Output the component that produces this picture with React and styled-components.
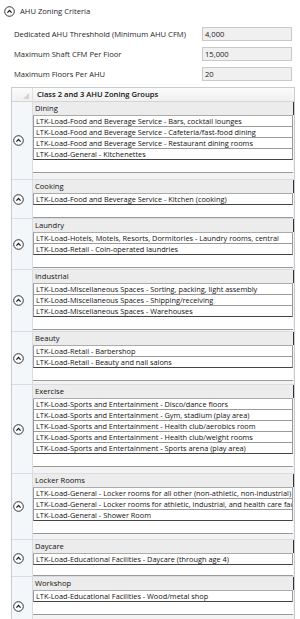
import React from "react";
import styled, { createGlobalStyle } from "styled-components";

const GlobalStyle = createGlobalStyle`
  html, body {
    margin: 0;
    padding: 0;
    background: #ffffff;
    overflow: hidden;
  }
  body {
    font-family: "Open Sans", "Noto Sans", sans-serif;
    font-size: 7.6px;
    color: #1e1e1e;
  }
`;

const fields = [
  { label: "Dedicated AHU Threshhold (Minimum AHU CFM)", value: "4,000" },
  { label: "Maximum Shaft CFM Per Floor", value: "15,000" },
  { label: "Maximum Floors Per AHU", value: "20" },
];

const groups = [
  {
    name: "Dining",
    tail: 6,
    items: [
      "LTK-Load-Food and Beverage Service - Bars, cocktail lounges",
      "LTK-Load-Food and Beverage Service - Cafeteria/fast-food dining",
      "LTK-Load-Food and Beverage Service - Restaurant dining rooms",
      "LTK-Load-General - Kitchenettes",
    ],
  },
  {
    name: "Cooking",
    tail: 0,
    items: ["LTK-Load-Food and Beverage Service - Kitchen (cooking)"],
  },
  {
    name: "Laundry",
    tail: 1,
    items: [
      "LTK-Load-Hotels, Motels, Resorts, Dormitories - Laundry rooms, central",
      "LTK-Load-Retail - Coin-operated laundries",
    ],
  },
  {
    name: "Industrial",
    tail: 1,
    items: [
      "LTK-Load-Miscellaneous Spaces - Sorting, packing, light assembly",
      "LTK-Load-Miscellaneous Spaces - Shipping/receiving",
      "LTK-Load-Miscellaneous Spaces - Warehouses",
    ],
  },
  {
    name: "Beauty",
    tail: 3,
    items: ["LTK-Load-Retail - Barbershop", "LTK-Load-Retail - Beauty and nail salons"],
  },
  {
    name: "Exercise",
    tail: 6,
    items: [
      "LTK-Load-Sports and Entertainment - Disco/dance floors",
      "LTK-Load-Sports and Entertainment - Gym, stadium (play area)",
      "LTK-Load-Sports and Entertainment - Health club/aerobics room",
      "LTK-Load-Sports and Entertainment - Health club/weight rooms",
      "LTK-Load-Sports and Entertainment - Sports arena (play area)",
    ],
  },
  {
    name: "Locker Rooms",
    tail: 5,
    items: [
      "LTK-Load-General - Locker rooms for all other (non-athletic, non-industrial)",
      "LTK-Load-General - Locker rooms for athletic, industrial, and health care facilities",
      "LTK-Load-General - Shower Room",
    ],
  },
  {
    name: "Daycare",
    tail: 0,
    empty: 10,
    items: ["LTK-Load-Educational Facilities - Daycare (through age 4)"],
  },
  {
    name: "Workshop",
    tail: 20,
    items: ["LTK-Load-Educational Facilities - Wood/metal shop"],
  },
];

function CollapseIcon({ size = 11 }) {
  return (
    <svg width={size} height={size} viewBox="0 0 11 11">
      <circle cx="5.5" cy="5.5" r="4.8" fill="#fff" stroke="#333" strokeWidth="1" />
      <path d="M3.4 6.6 L5.5 4.5 L7.6 6.6" fill="none" stroke="#222" strokeWidth="1.3" />
    </svg>
  );
}

export default function App() {
  return (
    <Page>
      <GlobalStyle />
      <ExpanderHeader>
        <CollapseIcon />
        <span>AHU Zoning Criteria</span>
      </ExpanderHeader>
      <Fields>
        {fields.map((f) => (
          <FieldRow key={f.label}>
            <FieldLabel>{f.label}</FieldLabel>
            <TextBox>{f.value}</TextBox>
          </FieldRow>
        ))}
      </Fields>
      <Grid>
        <HeaderRow>
          <SelectAll>
            <svg width="6" height="6" viewBox="0 0 6 6">
              <path d="M6 0 L6 6 L0 6 Z" fill="#d4d4d4" />
            </svg>
          </SelectAll>
          <HeaderCell>Class 2 and 3 AHU Zoning Groups</HeaderCell>
        </HeaderRow>
        {groups.map((g) => (
          <GroupRow key={g.name}>
            <RowHeader>
              <CollapseIcon />
            </RowHeader>
            <GroupBody>
              <GroupName>{g.name}</GroupName>
              <ItemList>
                {g.items.map((it) => (
                  <Item key={it}>{it}</Item>
                ))}
                <EmptyItem $h={g.empty ?? 12} />
              </ItemList>
              <Tail style={{ height: g.tail }} />
            </GroupBody>
          </GroupRow>
        ))}
      </Grid>
    </Page>
  );
}

const Page = styled.div`
  width: 300px;
  height: 619px;
  overflow: hidden;
  padding-top: 4px;
  box-sizing: border-box;
`;

const ExpanderHeader = styled.div`
  display: flex;
  align-items: center;
  gap: 5px;
  height: 14px;
  padding-left: 4px;
`;

const Fields = styled.div`
  display: flex;
  flex-direction: column;
  gap: 6px;
  padding: 9px 8px 6px 14px;
`;

const FieldRow = styled.div`
  display: flex;
  align-items: center;
  justify-content: space-between;
  height: 14px;
`;

const FieldLabel = styled.span`
  white-space: nowrap;
`;

const TextBox = styled.div`
  width: 86px;
  height: 12px;
  line-height: 12px;
  padding-left: 2px;
  background: #f0f0f0;
  border: 1px solid #c9c9c9;
`;

const Grid = styled.div`
  margin-left: 11px;
  width: 284px;
  border: 1px solid #c5ccd4;
  border-bottom: none;
  box-sizing: border-box;
`;

const HeaderRow = styled.div`
  display: flex;
  height: 13px;
  background: linear-gradient(#fbfbfb, #f0f0f0);
  border-bottom: 1px solid #d5d5d5;
`;

const SelectAll = styled.div`
  width: 21px;
  display: flex;
  align-items: flex-end;
  justify-content: flex-end;
  padding: 0 3px 2px 0;
  box-sizing: border-box;
  border-right: 1px solid #e0e0e0;
`;

const HeaderCell = styled.div`
  flex: 1;
  padding-left: 4px;
  line-height: 13px;
  font-weight: 600;
  color: #111;
`;

const GroupRow = styled.div`
  display: flex;
  border-bottom: 1px solid #d6dde5;
`;

const RowHeader = styled.div`
  width: 21px;
  flex: none;
  display: flex;
  align-items: center;
  justify-content: flex-start;
  padding-left: 1px;
  box-sizing: border-box;
  background: #f4f7fa;
  border-right: 1px solid #d6dde5;
`;

const GroupBody = styled.div`
  flex: 1;
  min-width: 0;
  background: #f3f3f3;
`;

const GroupName = styled.div`
  height: 13px;
  line-height: 13px;
  padding-left: 2px;
  background: #ececec;
  border-right: 1px solid #333;
  color: #111;
`;

const ItemList = styled.div`
  margin-right: 1px;
  background: #fff;
  border-top: 1px solid #ababab;
`;

const Item = styled.div`
  height: 10px;
  line-height: 10px;
  padding-left: 2px;
  font-size: 7.35px;
  white-space: nowrap;
  overflow: hidden;
  border-bottom: 1px solid #9a9a9a;
  border-left: 1px solid #9a9a9a;
  border-right: 1px solid #9a9a9a;
  color: #111;
  &:nth-last-child(2) {
    border-bottom-color: #444;
  }
`;

const EmptyItem = styled.div`
  height: ${(p) => p.$h}px;
  border-bottom: 1px solid #9a9a9a;
`;

const Tail = styled.div``;
